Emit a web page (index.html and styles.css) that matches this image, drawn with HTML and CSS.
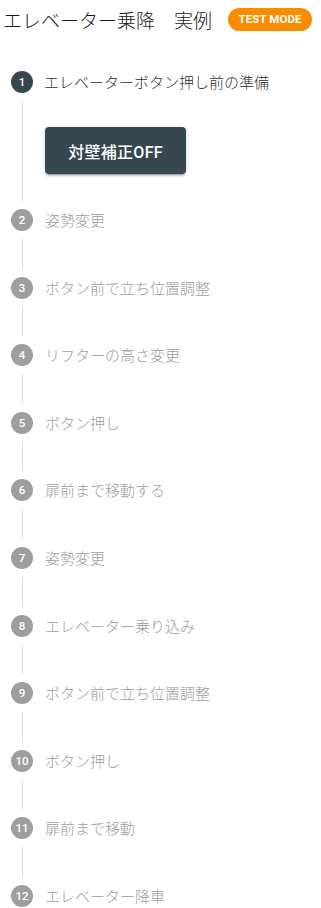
FILE: index.html
```html
<!DOCTYPE html>
<html lang="ja">
<head>
<meta charset="utf-8">
<title>エレベーター乗降 実例</title>
<link rel="stylesheet" href="styles.css">
</head>
<body>
<header class="header">
  <h1 class="title">エレベーター乗降　実例</h1>
  <span class="badge">TEST MODE</span>
</header>
<main class="stepper">
  <div class="step active"><span class="num">1</span><span class="label">エレベーターボタン押し前の準備</span></div>
  <div class="content open"><button class="btn">対壁補正OFF</button></div>
  <div class="step"><span class="num">2</span><span class="label">姿勢変更</span></div>
  <div class="content"></div>
  <div class="step"><span class="num">3</span><span class="label">ボタン前で立ち位置調整</span></div>
  <div class="content"></div>
  <div class="step"><span class="num">4</span><span class="label">リフターの高さ変更</span></div>
  <div class="content"></div>
  <div class="step"><span class="num">5</span><span class="label">ボタン押し</span></div>
  <div class="content"></div>
  <div class="step"><span class="num">6</span><span class="label">扉前まで移動する</span></div>
  <div class="content"></div>
  <div class="step"><span class="num">7</span><span class="label">姿勢変更</span></div>
  <div class="content"></div>
  <div class="step"><span class="num">8</span><span class="label">エレベーター乗り込み</span></div>
  <div class="content"></div>
  <div class="step"><span class="num">9</span><span class="label">ボタン前で立ち位置調整</span></div>
  <div class="content"></div>
  <div class="step"><span class="num">10</span><span class="label">ボタン押し</span></div>
  <div class="content"></div>
  <div class="step"><span class="num">11</span><span class="label">扉前まで移動</span></div>
  <div class="content"></div>
  <div class="step"><span class="num">12</span><span class="label">エレベーター降車</span></div>
</main>
</body>
</html>
```
FILE: styles.css
```css
html, body {
  margin: 0;
  padding: 0;
  background: #ffffff;
}
body {
  font-family: "Noto Sans CJK JP", "Noto Sans", sans-serif;
  color: rgba(0, 0, 0, 0.87);
  overflow: hidden;
}
.header {
  display: flex;
  align-items: center;
  height: 38px;
  padding-left: 3px;
}
.title {
  margin: 0;
  font-size: 19px;
  font-weight: 300;
  line-height: 1;
  color: #1a1a1a;
}
.badge {
  margin-left: 16px;
  width: 84px;
  height: 23px;
  border-radius: 12px;
  background: #fb8c00;
  color: #ffffff;
  font-family: "Roboto", "Noto Sans", sans-serif;
  font-weight: 700;
  font-size: 11.5px;
  letter-spacing: 0.1px;
  display: flex;
  align-items: center;
  justify-content: center;
}
.stepper {
  padding-top: 33px;
  display: flex;
  flex-direction: column;
}
.step {
  display: flex;
  align-items: center;
  height: 22px;
}
.num {
  margin-left: 11px;
  width: 22px;
  height: 22px;
  border-radius: 50%;
  background: #9e9e9e;
  color: #ffffff;
  font-family: "Roboto", "Noto Sans", sans-serif;
  font-weight: 500;
  font-size: 11.5px;
  display: flex;
  align-items: center;
  justify-content: center;
  flex-shrink: 0;
}
.label {
  margin-left: 12px;
  font-size: 15px;
  font-weight: 300;
  line-height: 22px;
  color: #9e9e9e;
  white-space: nowrap;
}
.step.active .num {
  background: #37474f;
}
.step.active .label {
  margin-left: 11px;
  color: rgba(0, 0, 0, 0.87);
}
.content {
  margin: 8px 0 8px 22px;
  height: 29.6px;
  border-left: 1px solid #dcdcdc;
  box-sizing: border-box;
}
.content.open {
  height: 100px;
  padding: 26px 0 0 22px;
}
.btn {
  width: 141px;
  height: 47px;
  border: none;
  border-radius: 4px;
  background: #37474f;
  color: #ffffff;
  font-family: "Roboto", "Noto Sans CJK JP", sans-serif;
  font-size: 16px;
  font-weight: 500;
  letter-spacing: 0.3px;
  box-shadow: 0 3px 1px -2px rgba(0,0,0,.2), 0 2px 2px 0 rgba(0,0,0,.14), 0 1px 5px 0 rgba(0,0,0,.12);
  padding: 0;
  cursor: pointer;
}
```
